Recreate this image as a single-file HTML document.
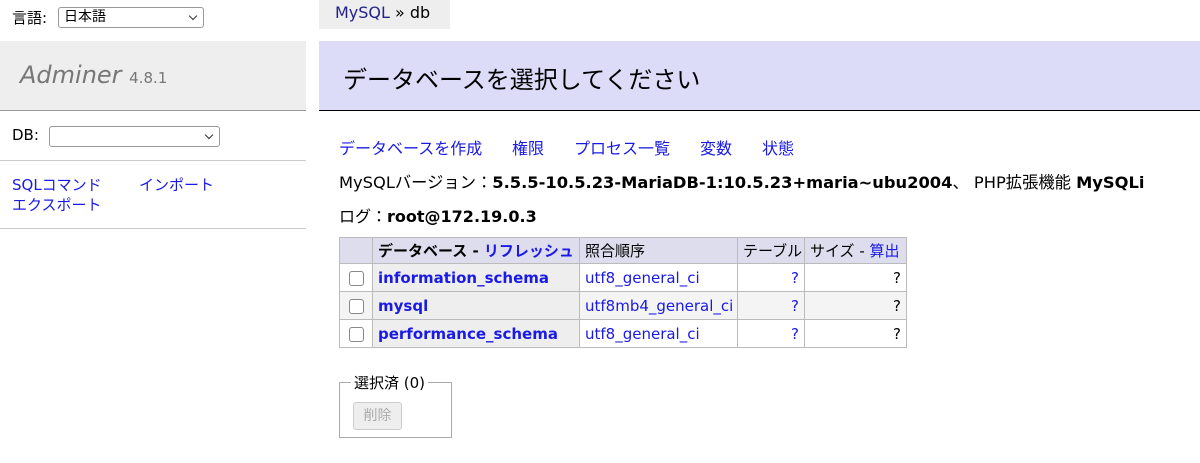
<!DOCTYPE html>
<html><head><meta charset="utf-8"><style>
*{box-sizing:border-box}
body{margin:0;width:1200px;height:463px;overflow:hidden;background:#fff;font-family:"DejaVu Sans","Noto Sans CJK JP",sans-serif;font-size:15px;color:#000;position:relative}
a{color:#1a1ae6;text-decoration:none}
.abs{position:absolute;white-space:nowrap}
.sel{position:absolute;border:1px solid #999;border-radius:3px;background:#fff;font-size:14px;padding:0 5px;height:21px;line-height:19px}
.sel:after{content:"";position:absolute;right:7px;top:5px;width:5px;height:5px;border-right:1.3px solid #333;border-bottom:1.3px solid #333;transform:rotate(45deg)}
table{border-collapse:collapse;position:absolute;left:339px;top:237px;table-layout:fixed;width:567px}
td,th{border:1px solid #bbb;height:28px;padding:0 5px;font-size:15px;white-space:nowrap;overflow:hidden}
th{background:#dde;font-weight:normal;text-align:left;height:26px}
.cb{display:inline-block;width:15px;height:15px;border:1px solid #888;border-radius:3px;background:#fff;vertical-align:middle}
</style></head><body>
<div class="abs" style="left:12px;top:7px">言語:</div>
<div class="sel" style="left:58px;top:7px;width:146px">日本語</div>
<div class="abs" style="left:0;top:41px;width:306px;height:70px;background:#eee;border-bottom:1px solid #999"></div>
<div class="abs" style="left:20px;top:61px;font-size:24px;font-style:italic;color:#777">Adminer <span style="font-size:15px;font-style:normal">4.8.1</span></div>
<div class="abs" style="left:12px;top:126px">DB:</div>
<div class="sel" style="left:49px;top:126px;width:171px"></div>
<div class="abs" style="left:0;top:160px;width:306px;border-top:1px solid #ccc"></div>
<div class="abs" style="left:12px;top:175px;line-height:20px"><a>SQLコマンド</a></div>
<div class="abs" style="left:139px;top:175px;line-height:20px"><a>インポート</a></div>
<div class="abs" style="left:12px;top:195px;line-height:20px"><a>エクスポート</a></div>
<div class="abs" style="left:0;top:228px;width:306px;border-top:1px solid #ccc"></div>

<div class="abs" style="left:319px;top:0;width:131px;height:29px;background:#eee;padding:3px 0 0 16px;font-size:16px"><a style="color:#22228a">MySQL</a> » db</div>
<div class="abs" style="left:319px;top:41px;width:881px;height:70px;background:#dcdcf8;border-bottom:1px solid #000;padding:19px 0 0 24px;font-size:24px">データベースを選択してください</div>
<div class="abs" style="left:339px;top:135px;font-size:16px"><a>データベースを作成</a></div>
<div class="abs" style="left:512px;top:135px;font-size:16px"><a>権限</a></div>
<div class="abs" style="left:574px;top:135px;font-size:16px"><a>プロセス一覧</a></div>
<div class="abs" style="left:700px;top:135px;font-size:16px"><a>変数</a></div>
<div class="abs" style="left:762px;top:135px;font-size:16px"><a>状態</a></div>
<div class="abs" style="left:339px;top:169px;font-size:16.3px">MySQLバージョン：<b>5.5.5-10.5.23-MariaDB-1:10.5.23+maria~ubu2004</b>、 PHP拡張機能 <b>MySQLi</b></div>
<div class="abs" style="left:339px;top:203px;font-size:16px">ログ：<b>root@172.19.0.3</b></div>
<table>
<colgroup><col style="width:33px"><col style="width:207px"><col style="width:158px"><col style="width:67px"><col style="width:102px"></colgroup>
<tr><th style="text-align:center"></th><th><b>データベース - <a>リフレッシュ</a></b></th><th>照合順序</th><th>テーブル</th><th>サイズ - <a>算出</a></th></tr>
<tr><td style="text-align:center"><span class="cb"></span></td><td style="background:#eee"><a><b>information_schema</b></a></td><td><a>utf8_general_ci</a></td><td style="text-align:right"><a>?</a></td><td style="text-align:right">?</td></tr>
<tr style="background:#f4f4f4"><td style="text-align:center"><span class="cb"></span></td><td style="background:#eee"><a><b>mysql</b></a></td><td><a>utf8mb4_general_ci</a></td><td style="text-align:right"><a>?</a></td><td style="text-align:right">?</td></tr>
<tr><td style="text-align:center"><span class="cb"></span></td><td style="background:#eee"><a><b>performance_schema</b></a></td><td><a>utf8_general_ci</a></td><td style="text-align:right"><a>?</a></td><td style="text-align:right">?</td></tr>
</table>
<div class="abs" style="left:339px;top:382px;width:113px;height:56px;border:1px solid #aaa"></div>
<div class="abs" style="left:351px;top:372px;background:#fff;padding:0 3px">選択済 (0)</div>
<div class="abs" style="left:353px;top:402px;width:49px;height:28px;border:1px solid #ccc;border-radius:3px;background:#eee;color:#aaa;font-size:14px;text-align:center;line-height:26px">削除</div>
</body></html>
